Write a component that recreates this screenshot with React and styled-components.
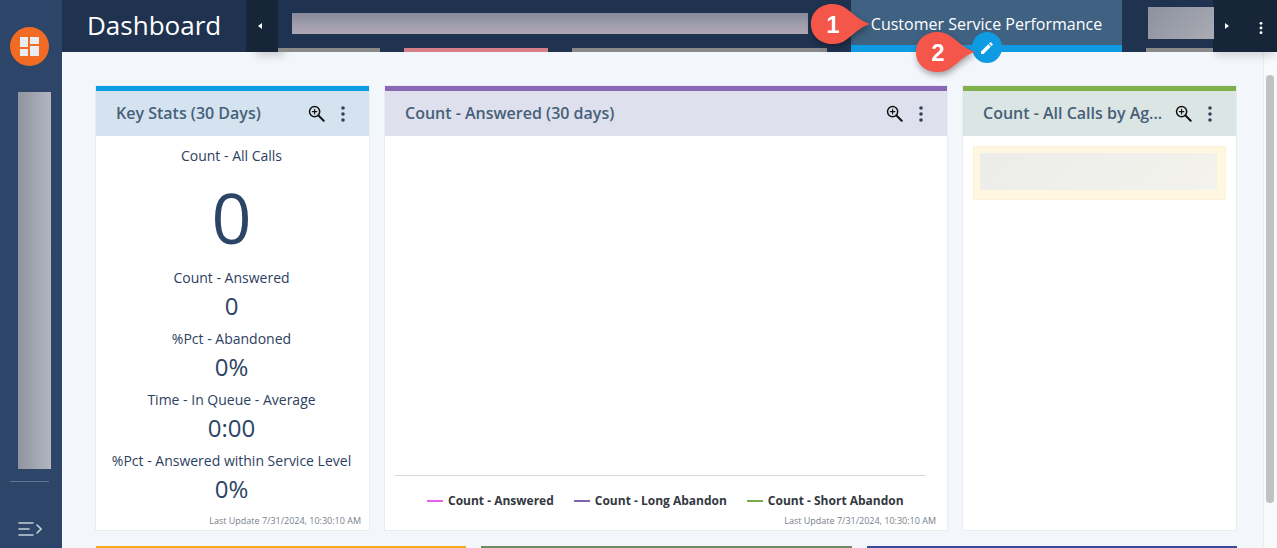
import React from 'react';
import styled, { createGlobalStyle } from 'styled-components';

const GlobalStyle = createGlobalStyle`
  html, body {
    margin: 0;
    height: 100%;
    overflow: hidden;
    font-family: "Open Sans", "Noto Sans", sans-serif;
  }
  * { box-sizing: border-box; }
`;

const Page = styled.div`
  width: 1277px;
  height: 548px;
  display: flex;
  position: relative;
  overflow: hidden;
  background: #f3f6fb;
`;

const Sidebar = styled.aside`
  width: 62px;
  flex: none;
  background: #2c4568;
  display: flex;
  flex-direction: column;
  align-items: center;
  padding: 27px 3px 0 0;
`;

const LogoCircle = styled.div`
  width: 39px;
  height: 39px;
  border-radius: 50%;
  background: #f26b25;
  display: flex;
  align-items: center;
  justify-content: center;
`;

const SideBlur = styled.div`
  width: 33px;
  height: 377px;
  margin: 26px 0 0 10px;
  background: linear-gradient(90deg, #8f94a1, #b3b6bf);
`;

const SideRule = styled.div`
  width: 39px;
  height: 1px;
  margin-top: 12px;
  background: #5d7391;
`;

const SideToggle = styled.div`
  margin-top: 39px;
  height: 16px;
  line-height: 0;
`;

const Main = styled.div`
  flex: 1;
  min-width: 0;
  display: flex;
  flex-direction: column;
`;

const TopBar = styled.header`
  height: 52px;
  flex: none;
  display: flex;
  background: #1f3350;
  position: relative;
  z-index: 1;
`;

const Title = styled.h1`
  width: 184px;
  flex: none;
  margin: 0;
  padding: 6px 0 0 25px;
  font-size: 26px;
  line-height: 38px;
  font-weight: 400;
  color: #fff;
`;

const Arrow = styled.div`
  width: 32px;
  flex: none;
  background: #162638;
  box-shadow: 8px 6px 8px -2px rgba(0, 0, 0, 0.16);
  display: flex;
  align-items: center;
  justify-content: center;
  line-height: 0;
  padding-right: 4px;
`;

const Tabs = styled.div`
  flex: 1;
  min-width: 0;
  display: flex;
  background: #1f3350;
  position: relative;
  z-index: 1;
`;

const BlurredTab = styled.div`
  width: ${p => p.$width}px;
  margin-right: ${p => p.$gap}px;
  flex: none;
  align-self: flex-end;
  height: 4px;
  background: ${p => p.$color};
`;

const ActiveTab = styled.div`
  width: 271px;
  flex: none;
  background: #3f6282;
  border-bottom: 7px solid #0e9be2;
  margin-right: 24px;
  color: #fff;
  font-size: 16px;
  line-height: 48px;
  text-align: center;
`;

const TitleBlur = styled.div`
  position: absolute;
  left: 230px;
  top: 13px;
  width: 516px;
  height: 21px;
  z-index: 1;
  background: linear-gradient(180deg, #85899a, #a29fae 60%, #b0a6b4);
`;

const TabBlur = styled.div`
  position: absolute;
  left: 1086px;
  top: 7px;
  width: 66px;
  height: 32px;
  z-index: 1;
  background: linear-gradient(135deg, #8d919d, #a9acb4);
`;

const RightTools = styled.div`
  width: 64px;
  flex: none;
  background: #162638;
  box-shadow: 0 6px 8px -2px rgba(0, 0, 0, 0.14);
  display: flex;
  align-items: center;
  padding-left: 12px;
  gap: 30px;
  line-height: 0;
`;

const RightDots = styled.span`
  margin-top: 4px;
`;

const Content = styled.main`
  flex: 1;
  min-height: 0;
  display: flex;
  padding: 33px 0 0 33px;
`;

const Dash = styled.div`
  width: 1144px;
  flex: none;
  display: flex;
  flex-direction: column;
  gap: 15px;
`;

const TopRow = styled.div`
  display: grid;
  grid-template-columns: 275px 564px 275px;
  gap: 14px;
  height: 446px;
  flex: none;
`;

const Card = styled.section`
  background: #fff;
  border: 1px solid #e8ecf3;
  display: flex;
  flex-direction: column;
  min-width: 0;
`;

const CardHead = styled.div`
  height: 50px;
  flex: none;
  border-top: 5px solid ${p => p.$accent};
  background: ${p => p.$tint};
  display: flex;
  align-items: center;
  padding: 0 24px 0 20px;
`;

const CardTitle = styled.h2`
  flex: 1;
  min-width: 0;
  margin: -2px 0 0;
  font-size: 16px;
  font-weight: 600;
  color: #466079;
  white-space: nowrap;
`;

const HeadIcons = styled.div`
  display: flex;
  align-items: center;
  gap: 16px;
  line-height: 0;
`;

const StatsBody = styled.div`
  flex: 1;
  padding: 10px 2px 0 0;
  text-align: center;
  position: relative;
  color: #2c4161;
`;

const StatLabel = styled.div`
  font-size: 14px;
  line-height: 20px;
`;

const StatValue = styled.div`
  font-size: 24px;
  line-height: 36px;
  height: 41px;
  color: #2b4566;
`;

const BigValue = styled.div`
  font-size: 70px;
  line-height: 102px;
  color: #2b4566;
`;

const Updated = styled.div`
  position: absolute;
  right: ${p => p.$right}px;
  bottom: 3px;
  font-size: 9px;
  line-height: 13px;
  color: #77808c;
`;

const ChartBody = styled.div`
  flex: 1;
  position: relative;
  padding: 339px 21px 0 10px;
`;

const Axis = styled.div`
  height: 1px;
  background: #d6dae0;
`;

const Legend = styled.ul`
  list-style: none;
  margin: 17px 0 0;
  padding: 0 0 0 32px;
  display: flex;
  gap: 20px;
`;

const LegendItem = styled.li`
  display: flex;
  align-items: center;
  gap: 5px;
  font-size: 12px;
  line-height: 16px;
  font-weight: 700;
  color: #33383f;
  &::before {
    content: "";
    width: 16px;
    height: 2px;
    background: ${p => p.$color};
  }
`;

const NoticeBody = styled.div`
  flex: 1;
  padding: 10px;
`;

const Notice = styled.div`
  height: 54px;
  border: 1px solid #fdf1d3;
  border-radius: 2px;
  background: #fff7df;
  padding: 6px 8px 6px 6px;
`;

const NoticeBlur = styled.div`
  height: 37px;
  background: linear-gradient(135deg, #ececea, #f3f2ec);
`;

const BottomRow = styled.div`
  display: grid;
  grid-template-columns: 370px 370.5px 370px;
  column-gap: 15px;
  margin-left: 1px;
`;

const StubCard = styled.div`
  height: 20px;
  background: #fff;
  border-top: 4px solid ${p => p.$accent};
`;

const ScrollTrack = styled.div`
  position: absolute;
  right: 0;
  top: 52px;
  bottom: 0;
  width: 14px;
  background: #f8f9fb;
  border-left: 1px solid #e9ecf1;
  padding: 23px 3px 0 2px;
`;

const ScrollThumb = styled.div`
  height: 428px;
  border-radius: 4px;
  background: #c2c2c2;
`;

const Callout = styled.div`
  position: absolute;
  left: ${p => p.$left}px;
  top: ${p => p.$top}px;
  width: 62px;
  height: 44px;
  z-index: 3;
  filter: drop-shadow(1px 3px 3px rgba(0, 0, 0, 0.35));
  line-height: 0;
`;

const CalloutNumber = styled.span`
  position: absolute;
  left: 0;
  top: 0;
  width: 46px;
  text-align: center;
  font-family: "Liberation Sans", Arial, sans-serif;
  font-size: 24px;
  font-weight: 700;
  line-height: 42px;
  color: #fff;
`;

const EditBadge = styled.div`
  position: absolute;
  left: 972px;
  top: 32px;
  width: 30px;
  height: 31px;
  border-radius: 50%;
  background: #0e9be2;
  display: flex;
  align-items: center;
  justify-content: center;
  line-height: 0;
  z-index: 2;
`;

const Dots = ({ color = '#33425a', size = 18 }) => (
  <svg width="4" height={size} viewBox="0 0 4 18">
    <circle cx="2" cy="3" r="1.8" fill={color} />
    <circle cx="2" cy="9" r="1.8" fill={color} />
    <circle cx="2" cy="15" r="1.8" fill={color} />
  </svg>
);

const ZoomIcon = () => (
  <svg width="17" height="17" viewBox="0 0 18 18" fill="none" stroke="#111" strokeLinecap="round">
    <circle cx="7" cy="7" r="5.4" strokeWidth="1.6" />
    <path d="M7 4.6v4.8M4.6 7h4.8" strokeWidth="1.2" />
    <path d="M11 11l5.6 5.6" strokeWidth="2.2" />
  </svg>
);

const Caret = ({ dir }) => (
  <svg width="4" height="6" viewBox="0 0 4 6">
    <path d={dir === 'left' ? 'M4 0v6L0 3z' : 'M0 0v6l4-3z'} fill="#fff" />
  </svg>
);

const CalloutShape = () => (
  <svg width="62" height="44" viewBox="0 0 62 44">
    <path d="M23 0C31 0 36 4 42 9C47 13 53 18 60 20C53 22 47 27 41 32C35 37 31 40 23 40C10 40 1 32 1 20C1 8 10 0 23 0Z" fill="#f5564a" />
  </svg>
);

const HeadActions = () => (
  <HeadIcons>
    <ZoomIcon />
    <Dots />
  </HeadIcons>
);

const stats = [
  ['Count - Answered', '0'],
  ['%Pct - Abandoned', '0%'],
  ['Time - In Queue - Average', '0:00'],
  ['%Pct - Answered within Service Level', '0%'],
];

const legend = [
  ['Count - Answered', '#e85fe6'],
  ['Count - Long Abandon', '#7f63a8'],
  ['Count - Short Abandon', '#7aab48'],
];

export default function App() {
  return (
    <Page>
      <GlobalStyle />
      <Sidebar>
        <LogoCircle>
          <svg width="19" height="19" viewBox="0 0 19 19" fill="#e9edf2">
            <rect x="0" y="0" width="8" height="10" />
            <rect x="10" y="0" width="9" height="7" />
            <rect x="0" y="12" width="8" height="7" />
            <rect x="10" y="9" width="9" height="10" />
          </svg>
        </LogoCircle>
        <SideBlur />
        <SideRule />
        <SideToggle>
          <svg width="24" height="16" viewBox="0 0 24 16" fill="none" stroke="#c5ced9" strokeWidth="1.6" strokeLinecap="round">
            <path d="M1 2h14M1 8h10M1 14h14M19 4l4 4-4 4" />
          </svg>
        </SideToggle>
      </Sidebar>
      <Main>
        <TopBar>
          <Title>Dashboard</Title>
          <Arrow><Caret dir="left" /></Arrow>
          <Tabs>
            <BlurredTab $width={102} $gap={24} $color="#8a8a8a" />
            <BlurredTab $width={144} $gap={24} $color="#d67f86" />
            <BlurredTab $width={255} $gap={24} $color="#8a8a8a" />
            <ActiveTab>Customer Service Performance</ActiveTab>
            <BlurredTab $width={67} $gap={0} $color="#8a8a8a" />
          </Tabs>
          <RightTools>
            <Caret dir="right" />
            <RightDots><Dots color="#fff" size={14} /></RightDots>
          </RightTools>
          <TitleBlur />
          <TabBlur />
        </TopBar>
        <Content>
          <Dash>
            <TopRow>
              <Card>
                <CardHead $accent="#0e9be2" $tint="#d5e3f0">
                  <CardTitle>Key Stats (30 Days)</CardTitle>
                  <HeadActions />
                </CardHead>
                <StatsBody>
                  <StatLabel>Count - All Calls</StatLabel>
                  <BigValue>0</BigValue>
                  {stats.map(([label, value]) => (
                    <React.Fragment key={label}>
                      <StatLabel>{label}</StatLabel>
                      <StatValue>{value}</StatValue>
                    </React.Fragment>
                  ))}
                  <Updated $right={8}>Last Update 7/31/2024, 10:30:10 AM</Updated>
                </StatsBody>
              </Card>
              <Card>
                <CardHead $accent="#8a68b5" $tint="#dee0ed">
                  <CardTitle>Count - Answered (30 days)</CardTitle>
                  <HeadActions />
                </CardHead>
                <ChartBody>
                  <Axis />
                  <Legend>
                    {legend.map(([label, color]) => (
                      <LegendItem key={label} $color={color}>{label}</LegendItem>
                    ))}
                  </Legend>
                  <Updated $right={11}>Last Update 7/31/2024, 10:30:10 AM</Updated>
                </ChartBody>
              </Card>
              <Card>
                <CardHead $accent="#7fb04a" $tint="#dbe5e3">
                  <CardTitle>Count - All Calls by Ag...</CardTitle>
                  <HeadActions />
                </CardHead>
                <NoticeBody>
                  <Notice><NoticeBlur /></Notice>
                </NoticeBody>
              </Card>
            </TopRow>
            <BottomRow>
              <StubCard $accent="#f5ab1c" />
              <StubCard $accent="#6f8a66" />
              <StubCard $accent="#3c4a9e" />
            </BottomRow>
          </Dash>
        </Content>
      </Main>
      <ScrollTrack><ScrollThumb /></ScrollTrack>
      <Callout $left={810} $top={4}>
        <CalloutShape />
        <CalloutNumber>1</CalloutNumber>
      </Callout>
      <EditBadge>
        <svg width="14" height="14" viewBox="0 0 14 14" fill="#fff">
          <path d="M1 10.5V13h2.5l7.3-7.3-2.5-2.5zM12.6 3.9a.7.7 0 0 0 0-1L11.1 1.4a.7.7 0 0 0-1 0L9 2.5 11.5 5z" />
        </svg>
      </EditBadge>
      <Callout $left={915} $top={32}>
        <CalloutShape />
        <CalloutNumber>2</CalloutNumber>
      </Callout>
    </Page>
  );
}
